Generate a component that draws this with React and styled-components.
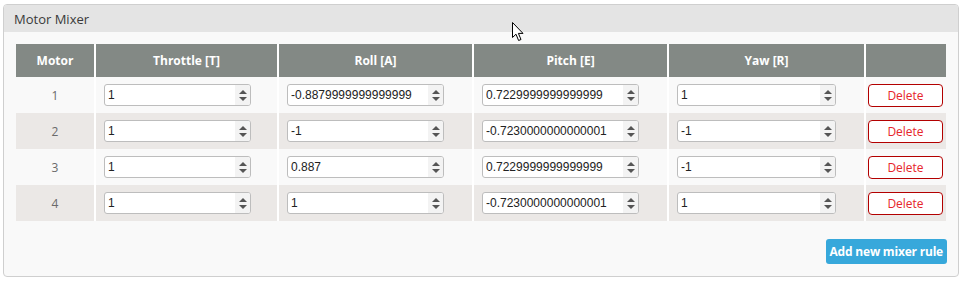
import React from 'react';
import styled, { createGlobalStyle } from 'styled-components';

const GlobalStyle = createGlobalStyle`
  body {
    margin: 0;
    background: #fff;
    font-family: "Open Sans", "Liberation Sans", Arial, sans-serif;
  }
`

const Panel = styled.div`
  position: relative;
  margin: 4px 5px 0 3px;
  border: 1px solid #cfcfcf;
  border-radius: 4px;
  background: #f9f9f9;
  overflow: hidden;
`

const PanelHeader = styled.div`
  height: 27px;
  background: #e4e4e4;
  padding-left: 10px;
  display: flex;
  align-items: center;
  font-size: 13px;
  color: #3a3a3a;
`

const PanelBody = styled.div`
  padding: 12px 11px 12px 12px;
  display: flex;
  flex-direction: column;
`

const Table = styled.table`
  width: 930px;
  table-layout: fixed;
  border-collapse: collapse;
`

const Th = styled.th`
  height: 33px;
  padding: 0;
  background: #838985;
  color: #fff;
  font-size: 12px;
  font-weight: 700;
  text-align: center;
  border-left: ${p => (p.first ? 'none' : '2px solid #fff')};
`

const Row = styled.tr`
  background: ${p => (p.shaded ? '#ebe8e6' : '#f9f9f9')};
`

const Td = styled.td`
  height: 36px;
  padding: 0 0 0 ${p => p.pad || 0}px;
  font-size: 12px;
  color: #6a6a6a;
  text-align: ${p => (p.center ? 'center' : 'left')};
  border-left: ${p => (p.first ? 'none' : '2px solid #fff')};
`

const NumberBox = styled.div`
  width: 84%;
  height: 20px;
  display: flex;
  align-items: stretch;
  background: #fff;
  border: 1px solid #bdbdbd;
  border-radius: 3px;
  overflow: hidden;
`

const NumberInput = styled.input`
  flex: 1;
  min-width: 0;
  border: none;
  outline: none;
  padding: 0 0 0 3px;
  font-family: "Liberation Sans", Arial, sans-serif;
  font-size: 12px;
  color: #222;
  background: transparent;
`

const Spinner = styled.div`
  width: 15px;
  display: flex;
  flex-direction: column;
  align-items: center;
  justify-content: center;
  gap: 3px;
  background: #f3f3f3;
`

const Arrow = styled.span`
  width: 0;
  height: 0;
  border-left: 4px solid transparent;
  border-right: 4px solid transparent;
  border-${p => (p.down ? 'top' : 'bottom')}: 4px solid #555;
`

const DeleteButton = styled.button`
  width: 75px;
  height: 23px;
  margin-left: 2px;
  border: 1px solid #b30000;
  border-radius: 4px;
  background: #fff;
  color: #e6252a;
  font-family: "Open Sans", "Liberation Sans", Arial, sans-serif;
  font-size: 12px;
  padding: 0;
`

const Footer = styled.div`
  display: flex;
  justify-content: flex-end;
  margin-top: 18px;
`

const AddButton = styled.button`
  height: 25px;
  padding: 0 4px;
  border: none;
  border-radius: 3px;
  background: #37a8db;
  color: #fff;
  font-family: "Open Sans", "Liberation Sans", Arial, sans-serif;
  font-size: 12px;
  font-weight: 700;
  letter-spacing: -0.2px;
`

const Cursor = styled.svg`
  position: absolute;
  left: 508px;
  top: 17px;
`

const mixer = [
  ['1', '-0.8879999999999999', '0.7229999999999999', '1'],
  ['1', '-1', '-0.7230000000000001', '-1'],
  ['1', '0.887', '0.7229999999999999', '-1'],
  ['1', '1', '-0.7230000000000001', '1'],
]

const NumberField = ({ value }) => (
  <NumberBox>
    <NumberInput type="text" defaultValue={value} />
    <Spinner>
      <Arrow />
      <Arrow down />
    </Spinner>
  </NumberBox>
)

export default function App() {
  return (
    <>
      <GlobalStyle />
      <Panel>
        <PanelHeader>Motor Mixer</PanelHeader>
        <PanelBody>
          <Table>
            <colgroup>
              <col style={{ width: 79 }} />
              <col style={{ width: 183 }} />
              <col style={{ width: 195 }} />
              <col style={{ width: 195 }} />
              <col style={{ width: 197 }} />
              <col style={{ width: 81 }} />
            </colgroup>
            <thead>
              <tr>
                <Th first>Motor</Th>
                <Th>Throttle [T]</Th>
                <Th>Roll [A]</Th>
                <Th>Pitch [E]</Th>
                <Th>Yaw [R]</Th>
                <Th></Th>
              </tr>
            </thead>
            <tbody>
              {mixer.map((row, i) => (
                <Row key={i} shaded={i % 2 === 1}>
                  <Td first center>{i + 1}</Td>
                  {row.map((v, j) => (
                    <Td key={j} pad={8}>
                      <NumberField value={v} />
                    </Td>
                  ))}
                  <Td>
                    <DeleteButton>Delete</DeleteButton>
                  </Td>
                </Row>
              ))}
            </tbody>
          </Table>
          <Footer>
            <AddButton>Add new mixer rule</AddButton>
          </Footer>
        </PanelBody>
        <Cursor width="13" height="20" viewBox="0 0 13 20">
          <path d="M0.5 0.5 L0.5 15.5 L4 12.2 L6.6 18.5 L9 17.5 L6.4 11.4 L11 11.4 Z" fill="#fff" stroke="#000" strokeWidth="1" />
        </Cursor>
      </Panel>
    </>
  )
}
